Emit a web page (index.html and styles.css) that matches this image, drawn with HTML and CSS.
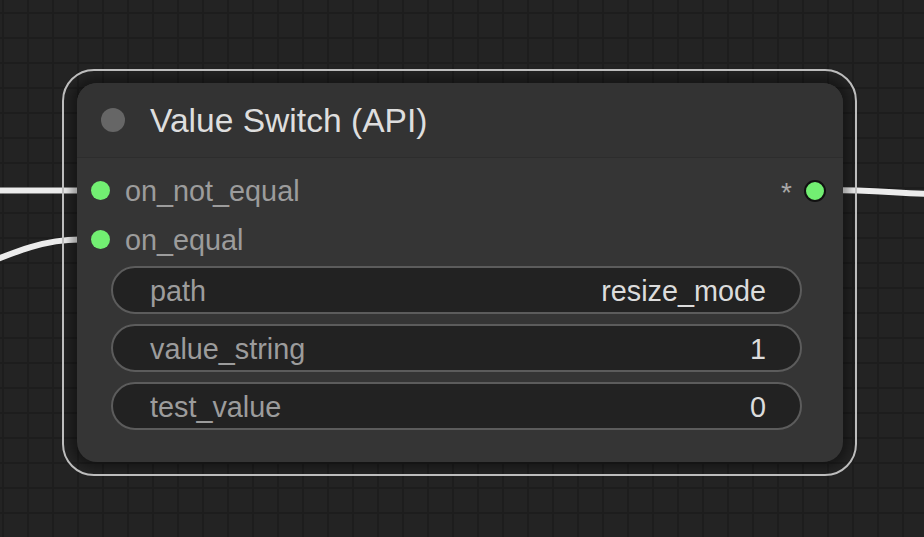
FILE: index.html
```html
<!DOCTYPE html>
<html>
<head>
<meta charset="utf-8">
<link rel="stylesheet" href="styles.css">
</head>
<body>
<div class="canvas">
  <svg class="links" width="924" height="537" viewBox="0 0 924 537">
    <path d="M-10 190.5 L80 190.5" />
    <path d="M-40 274 C 10 254, 40 239.5, 80 239.5" />
    <path d="M826 190 C 875 190, 895 193, 934 194" />
  </svg>
  <div class="node">
    <div class="title">
      <span class="title-dot"></span>
      <span class="title-text">Value Switch (API)</span>
    </div>
    <div class="slots">
      <div class="slot-row">
        <div class="input"><span class="dot"></span><span class="slot-label">on_not_equal</span></div>
        <div class="output"><span class="slot-label star">*</span><span class="dot out"></span></div>
      </div>
      <div class="slot-row">
        <div class="input"><span class="dot"></span><span class="slot-label">on_equal</span></div>
      </div>
    </div>
    <div class="widgets">
      <div class="widget"><span class="w-label">path</span><span class="w-value">resize_mode</span></div>
      <div class="widget"><span class="w-label">value_string</span><span class="w-value">1</span></div>
      <div class="widget"><span class="w-label">test_value</span><span class="w-value">0</span></div>
    </div>
  </div>
</div>
</body>
</html>
```

FILE: styles.css
```css
html, body {
  margin: 0;
  padding: 0;
}
body {
  width: 924px;
  height: 537px;
  overflow: hidden;
  background-color: #232323;
  background-image:
    linear-gradient(to right, #1d1d1d 2px, transparent 2px),
    linear-gradient(to bottom, #1d1d1d 2px, transparent 2px);
  background-size: 25px 25px;
  background-position: 2px 12px;
  font-family: "Liberation Sans", Arial, sans-serif;
}
.canvas {
  position: relative;
  width: 924px;
  height: 537px;
}
.links {
  position: absolute;
  left: 0;
  top: 0;
}
.links path {
  fill: none;
  stroke: #ececec;
  stroke-width: 6;
}
.node {
  position: absolute;
  left: 77px;
  top: 83px;
  width: 766px;
  height: 379px;
  border-radius: 20px;
  background: #353535;
  box-shadow: 0 0 10px 6px rgba(0, 0, 0, 0.35);
  display: flex;
  flex-direction: column;
}
.node::before {
  content: "";
  position: absolute;
  left: -15px;
  top: -14px;
  right: -14px;
  bottom: -14px;
  border: 2.5px solid #bdbdbd;
  border-radius: 32px;
  pointer-events: none;
}
.title {
  height: 74px;
  background: #333333;
  border-bottom: 1px solid #2d2d2d;
  border-radius: 20px 20px 0 0;
  display: flex;
  align-items: center;
  padding-left: 24px;
}
.title-dot {
  width: 24px;
  height: 24px;
  border-radius: 50%;
  background: #666666;
}
.title-text {
  margin-left: 25px;
  color: #dedede;
  font-size: 33.6px;
  padding-top: 2px;
}
.slots {
  padding-top: 8px;
  display: flex;
  flex-direction: column;
}
.slot-row {
  height: 49px;
  display: flex;
  align-items: center;
  justify-content: space-between;
}
.input, .output {
  display: flex;
  align-items: center;
}
.input {
  padding-left: 14px;
}
.output {
  padding-right: 17px;
}
.dot {
  width: 19px;
  height: 19px;
  border-radius: 50%;
  background: #72ef72;
}
.dot.out {
  width: 18px;
  height: 18px;
  border: 2px solid #111;
  box-sizing: content-box;
}
.slot-label {
  color: #9c9c9c;
  font-size: 28.8px;
  margin-left: 15px;
  padding-top: 2px;
}
.star {
  margin-left: 0;
  margin-right: 12px;
  font-size: 28px;
  position: relative;
  top: 1px;
  color: #a8a8a8;
}
.widgets {
  margin-top: 2px;
  padding-left: 34px;
  padding-right: 41px;
  display: flex;
  flex-direction: column;
  gap: 10px;
}
.widget {
  height: 48px;
  box-sizing: border-box;
  border: 2px solid #5c5c5c;
  border-radius: 24px;
  background: #222222;
  display: flex;
  align-items: center;
  justify-content: space-between;
  padding: 3px 34px 0 37px;
  font-size: 28.8px;
}
.w-label {
  color: #9c9c9c;
}
.w-value {
  color: #dcdcdc;
}
```
